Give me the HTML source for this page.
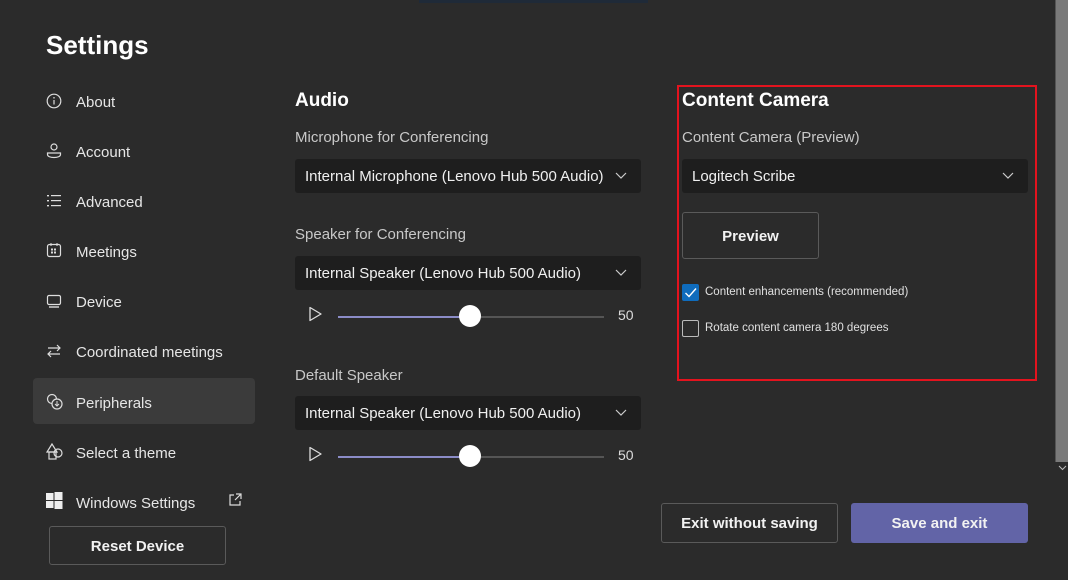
<!DOCTYPE html>
<html><head><style>
*{margin:0;padding:0;box-sizing:border-box}
body{width:1068px;height:580px;background:#2b2b2b;font-family:"Liberation Sans",sans-serif;color:#e8e8e8;position:relative;overflow:hidden}
.a{position:absolute}
.nav{position:absolute;left:76px;font-size:15px;color:#e6e6e6}
.ic{position:absolute;left:46px}
.lbl{position:absolute;font-size:15px;color:#c8c8c8}
.dd{position:absolute;height:34px;background:#1e1e1e;border-radius:3px;font-size:15px;color:#f0f0f0;padding:9px 10px}
.dd svg{position:absolute;right:14px;top:13px}
.btn{position:absolute;border:1px solid #5a5a5a;border-radius:3px;font-size:15px;font-weight:bold;color:#f2f2f2;text-align:center}
.trk{position:absolute;height:2px;background:#555}
</style></head><body>
<div class="a" style="left:419px;top:0;width:229px;height:3px;background:#1f2a38"></div>
<div class="a" style="left:46px;top:30px;font-size:26px;font-weight:bold;color:#fff">Settings</div>

<div class="a" style="left:33px;top:378px;width:222px;height:46px;background:#3b3b3b;border-radius:4px"></div>

<svg class="ic" style="top:93px" width="16" height="16"><circle cx="8" cy="8" r="6.8" fill="none" stroke="#ddd" stroke-width="1.2"/><line x1="8" y1="7" x2="8" y2="11.5" stroke="#ddd" stroke-width="1.2"/><circle cx="8" cy="4.8" r=".8" fill="#ddd"/></svg>
<div class="nav" style="top:94px">About</div>
<svg class="ic" style="top:143px" width="16" height="16"><circle cx="8" cy="4" r="3" fill="none" stroke="#ddd" stroke-width="1.2"/><path d="M1.5 10h13v1.5c0 2-3 3-6.5 3s-6.5-1-6.5-3z" fill="none" stroke="#ddd" stroke-width="1.2"/></svg>
<div class="nav" style="top:144px">Account</div>
<svg class="ic" style="top:193px" width="16" height="16"><g fill="#ddd"><rect x="1" y="2" width="2" height="1.4"/><rect x="1" y="7" width="2" height="1.4"/><rect x="1" y="12" width="2" height="1.4"/><rect x="5" y="2" width="10" height="1.2"/><rect x="5" y="7" width="10" height="1.2"/><rect x="5" y="12" width="10" height="1.2"/></g></svg>
<div class="nav" style="top:194px">Advanced</div>
<svg class="ic" style="top:242px" width="16" height="16"><rect x="1.5" y="2.5" width="13" height="12" rx="2" fill="none" stroke="#ddd" stroke-width="1.2"/><line x1="5" y1="1" x2="5" y2="4" stroke="#ddd"/><line x1="11" y1="1" x2="11" y2="4" stroke="#ddd"/><g fill="#ddd"><rect x="5" y="6.5" width="2" height="2"/><rect x="8" y="6.5" width="2" height="2"/><rect x="5" y="9.5" width="2" height="2"/><rect x="8" y="9.5" width="2" height="2"/></g></svg>
<div class="nav" style="top:244px">Meetings</div>
<svg class="ic" style="top:293px" width="16" height="16"><rect x="1.5" y="2.5" width="13" height="9" rx="1.5" fill="none" stroke="#ddd" stroke-width="1.2"/><line x1="3" y1="14" x2="13" y2="14" stroke="#ddd" stroke-width="1.4"/></svg>
<div class="nav" style="top:294px">Device</div>
<svg class="ic" style="top:343px" width="16" height="16"><path d="M2 5h12M11 2l3 3-3 3M14 11H2M5 8l-3 3 3 3" fill="none" stroke="#ddd" stroke-width="1.2"/></svg>
<div class="nav" style="top:344px">Coordinated meetings</div>
<svg class="ic" style="top:393px" width="18" height="18"><circle cx="6" cy="6" r="4.5" fill="none" stroke="#ddd" stroke-width="1.2"/><circle cx="11" cy="11" r="5" fill="#3b3b3b" stroke="#ddd" stroke-width="1.2"/><path d="M11 8v5M9 11l2 2 2-2" fill="none" stroke="#ddd"/></svg>
<div class="nav" style="top:395px">Peripherals</div>
<svg class="ic" style="top:443px" width="18" height="18"><path d="M6 1L1 9h10z" fill="none" stroke="#ddd" stroke-width="1.2"/><rect x="3" y="9" width="7" height="7" fill="none" stroke="#ddd" stroke-width="1.2"/><circle cx="12" cy="10" r="4" fill="none" stroke="#ddd" stroke-width="1.2"/></svg>
<div class="nav" style="top:445px">Select a theme</div>
<svg class="ic" style="top:492px" width="17" height="17"><g fill="#eee"><rect x="0" y="1" width="7.5" height="7"/><rect x="8.5" y="0" width="8" height="8"/><rect x="0" y="9" width="7.5" height="7"/><rect x="8.5" y="9" width="8" height="8"/></g></svg>
<div class="nav" style="top:495px">Windows Settings</div>
<svg class="a" style="left:228px;top:493px" width="14" height="14"><path d="M6 2H2v10h10V8M8 1h5v5M13 1L7 7" fill="none" stroke="#ddd" stroke-width="1.2"/></svg>
<div class="btn" style="left:49px;top:526px;width:177px;height:39px;line-height:39px">Reset Device</div>

<div class="a" style="left:295px;top:90px;font-size:19px;font-weight:bold;color:#fff">Audio</div>
<div class="lbl" style="left:295px;top:129px">Microphone for Conferencing</div>
<div class="dd" style="left:295px;top:159px;width:346px">Internal Microphone (Lenovo Hub 500 Audio)<svg width="12" height="8"><path d="M1 1l5 5 5-5" fill="none" stroke="#ccc" stroke-width="1.2"/></svg></div>
<div class="lbl" style="left:295px;top:226px">Speaker for Conferencing</div>
<div class="dd" style="left:295px;top:256px;width:346px">Internal Speaker (Lenovo Hub 500 Audio)<svg width="12" height="8"><path d="M1 1l5 5 5-5" fill="none" stroke="#ccc" stroke-width="1.2"/></svg></div>
<svg class="a" style="left:308px;top:306px" width="16" height="16"><path d="M2 1.5l11 6.5-11 6.5z" fill="none" stroke="#ddd" stroke-width="1.3" stroke-linejoin="round"/></svg>
<div class="trk" style="left:338px;top:316px;width:266px"></div><div class="trk" style="left:338px;top:316px;width:132px;background:#8b8cc7"></div>
<div class="a" style="left:459px;top:305px;width:22px;height:22px;border-radius:50%;background:#fff"></div>
<div class="a" style="left:618px;top:307px;font-size:14px;color:#ddd">50</div>
<div class="lbl" style="left:295px;top:367px">Default Speaker</div>
<div class="dd" style="left:295px;top:396px;width:346px">Internal Speaker (Lenovo Hub 500 Audio)<svg width="12" height="8"><path d="M1 1l5 5 5-5" fill="none" stroke="#ccc" stroke-width="1.2"/></svg></div>
<svg class="a" style="left:308px;top:446px" width="16" height="16"><path d="M2 1.5l11 6.5-11 6.5z" fill="none" stroke="#ddd" stroke-width="1.3" stroke-linejoin="round"/></svg>
<div class="trk" style="left:338px;top:456px;width:266px"></div><div class="trk" style="left:338px;top:456px;width:132px;background:#8b8cc7"></div>
<div class="a" style="left:459px;top:445px;width:22px;height:22px;border-radius:50%;background:#fff"></div>
<div class="a" style="left:618px;top:447px;font-size:14px;color:#ddd">50</div>

<div class="a" style="left:677px;top:85px;width:360px;height:296px;border:2px solid #e3131e"></div>
<div class="a" style="left:682px;top:90px;font-size:19px;font-weight:bold;color:#fff">Content Camera</div>
<div class="lbl" style="left:682px;top:129px">Content Camera (Preview)</div>
<div class="dd" style="left:682px;top:159px;width:346px">Logitech Scribe<svg width="12" height="8"><path d="M1 1l5 5 5-5" fill="none" stroke="#ccc" stroke-width="1.2"/></svg></div>
<div class="btn" style="left:682px;top:212px;width:137px;height:47px;line-height:47px">Preview</div>
<div class="a" style="left:682px;top:284px;width:17px;height:17px;background:#0f6cbd;border-radius:2px"></div>
<svg class="a" style="left:682px;top:284px" width="17" height="17"><path d="M3.5 9l3.5 3.5 7-8" fill="none" stroke="#fff" stroke-width="1.4"/></svg>
<div class="a" style="left:705px;top:286px;font-size:11.5px;color:#e0e0e0">Content enhancements (recommended)</div>
<div class="a" style="left:682px;top:320px;width:17px;height:17px;border:1.5px solid #bbb;border-radius:2px"></div>
<div class="a" style="left:705px;top:322px;font-size:11.5px;color:#e0e0e0">Rotate content camera 180 degrees</div>

<div class="btn" style="left:661px;top:503px;width:177px;height:40px;line-height:40px">Exit without saving</div>
<div class="btn" style="left:851px;top:503px;width:177px;height:40px;line-height:42px;background:#6264a7;border:none">Save and exit</div>

<div class="a" style="left:1055px;top:0;width:13px;height:462px;background:#7a7a7a;border-left:1px solid #555"></div>
<svg class="a" style="left:1058px;top:464px" width="9" height="8"><path d="M1 2l3.5 3.5L8 2" fill="none" stroke="#bbb"/></svg>
</body></html>
